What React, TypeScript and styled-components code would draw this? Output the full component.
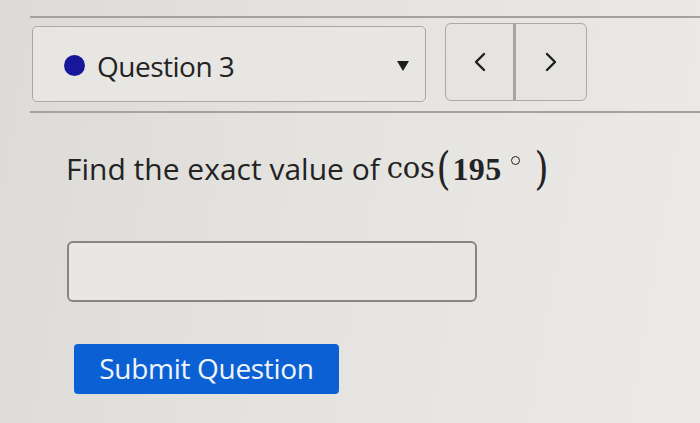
import React from 'react';
import styled, { createGlobalStyle } from 'styled-components';

const GlobalStyle = createGlobalStyle`
  html, body {
    margin: 0;
    padding: 0;
  }
  body {
    background: linear-gradient(100deg, #dcdbd7 0%, #e4e3df 45%, #ebeae7 100%);
    font-family: 'Open Sans', 'Liberation Sans', sans-serif;
    color: #232323;
    width: 700px;
    height: 423px;
    overflow: hidden;
  }
`;

const Page = styled.div`
  display: flex;
  flex-direction: column;
  padding-top: 16px;
`;

const Header = styled.div`
  margin-left: 30px;
  border-top: 2px solid #a3a29e;
  border-bottom: 2px solid #a3a29e;
  display: flex;
  align-items: center;
  gap: 19px;
  padding: 8px 0 9px 2px;
`;

const Select = styled.div`
  box-sizing: border-box;
  width: 394px;
  height: 76px;
  border: 1.5px solid #a9a8a4;
  border-radius: 5px;
  background: #e7e6e2;
  display: flex;
  align-items: center;
  padding: 0 16px 0 31px;
`;

const Dot = styled.span`
  width: 21px;
  height: 21px;
  border-radius: 50%;
  background: #17179a;
  margin-right: 12px;
  margin-top: 2px;
`;

const SelectLabel = styled.span`
  font-size: 28px;
  letter-spacing: -0.5px;
  flex: 1;
  line-height: 1;
  margin-top: 3px;
`;

const Caret = styled.span`
  width: 0;
  height: 0;
  border-left: 6px solid transparent;
  border-right: 6px solid transparent;
  border-top: 10px solid #1d1d1d;
  margin-top: 4px;
`;

const Nav = styled.div`
  box-sizing: border-box;
  display: flex;
  height: 78px;
  margin-top: -4px;
  border: 1.5px solid #a9a8a4;
  border-radius: 6px;
  overflow: hidden;
  background: #e5e4e1;
`;

const NavButton = styled.button<{ divided?: boolean }>`
  width: 70px;
  height: 100%;
  border: none;
  border-right: ${(p) => (p.divided ? '3px solid #a5a4a0' : 'none')};
  background: transparent;
  display: flex;
  align-items: center;
  justify-content: center;
  padding: 0;
`;

const Content = styled.div`
  display: flex;
  flex-direction: column;
  padding-left: 66px;
`;

const Prompt = styled.p`
  margin: 35px 0 0;
  font-size: 30px;
  letter-spacing: 0;
  display: flex;
  align-items: center;
  height: 40px;
`;

const MathText = styled.span`
  font-family: 'Liberation Serif', 'DejaVu Serif', serif;
  font-size: 30px;
  margin-left: 7px;
  display: inline-flex;
  align-items: center;
`;

const Fn = styled.span`
  font-family: 'DejaVu Serif', serif;
  font-size: 29px;
  letter-spacing: -0.3px;
`;

const Num = styled.span`
  font-size: 32px;
  font-weight: bold;
  letter-spacing: 0.3px;
  margin-top: 2px;
`;

const Paren = styled.span`
  font-family: 'DejaVu Serif', serif;
  font-weight: 300;
  font-size: 36px;
  transform: scaleY(1.25);
  margin: 0 2px;
`;

const Degree = styled.span`
  width: 7px;
  height: 7px;
  border: 1.6px solid #232323;
  border-radius: 50%;
  margin: -16px 12px 0 10px;
`;

const AnswerInput = styled.input`
  box-sizing: border-box;
  margin-top: 53px;
  margin-left: 1px;
  width: 410px;
  height: 61px;
  border: 2px solid #86857f;
  border-radius: 6px;
  background: #e8e7e3;
  outline: none;
`;

const SubmitButton = styled.button`
  box-sizing: border-box;
  margin-top: 42px;
  margin-left: 8px;
  width: 265px;
  height: 50px;
  border: none;
  border-radius: 4px;
  background: #0b61d4;
  color: #f1f4fa;
  font-family: 'Open Sans', 'Liberation Sans', sans-serif;
  font-size: 28px;
  letter-spacing: -0.3px;
  align-self: flex-start;
  padding: 0 0 3px;
`;

const Chevron = ({ dir }: { dir: 'left' | 'right' }) => (
  <svg width="14" height="22" viewBox="0 0 14 22">
    <path
      d={dir === 'left' ? 'M11 3 L3 11 L11 19' : 'M3 3 L11 11 L3 19'}
      fill="none"
      stroke="#1e1e1e"
      strokeWidth="2.4"
      strokeLinecap="round"
      strokeLinejoin="round"
    />
  </svg>
);

export default function App() {
  return (
    <>
      <GlobalStyle />
      <Page>
        <Header>
          <Select>
            <Dot />
            <SelectLabel>Question 3</SelectLabel>
            <Caret />
          </Select>
          <Nav>
            <NavButton divided aria-label="Previous question">
              <Chevron dir="left" />
            </NavButton>
            <NavButton aria-label="Next question">
              <Chevron dir="right" />
            </NavButton>
          </Nav>
        </Header>
        <Content>
          <Prompt>
            Find the exact value of
            <MathText>
              <Fn>cos</Fn>
              <Paren>(</Paren>
              <Num>195</Num>
              <Degree aria-label="degrees" />
              <Paren>)</Paren>
            </MathText>
          </Prompt>
          <AnswerInput type="text" />
          <SubmitButton>Submit Question</SubmitButton>
        </Content>
      </Page>
    </>
  );
}
